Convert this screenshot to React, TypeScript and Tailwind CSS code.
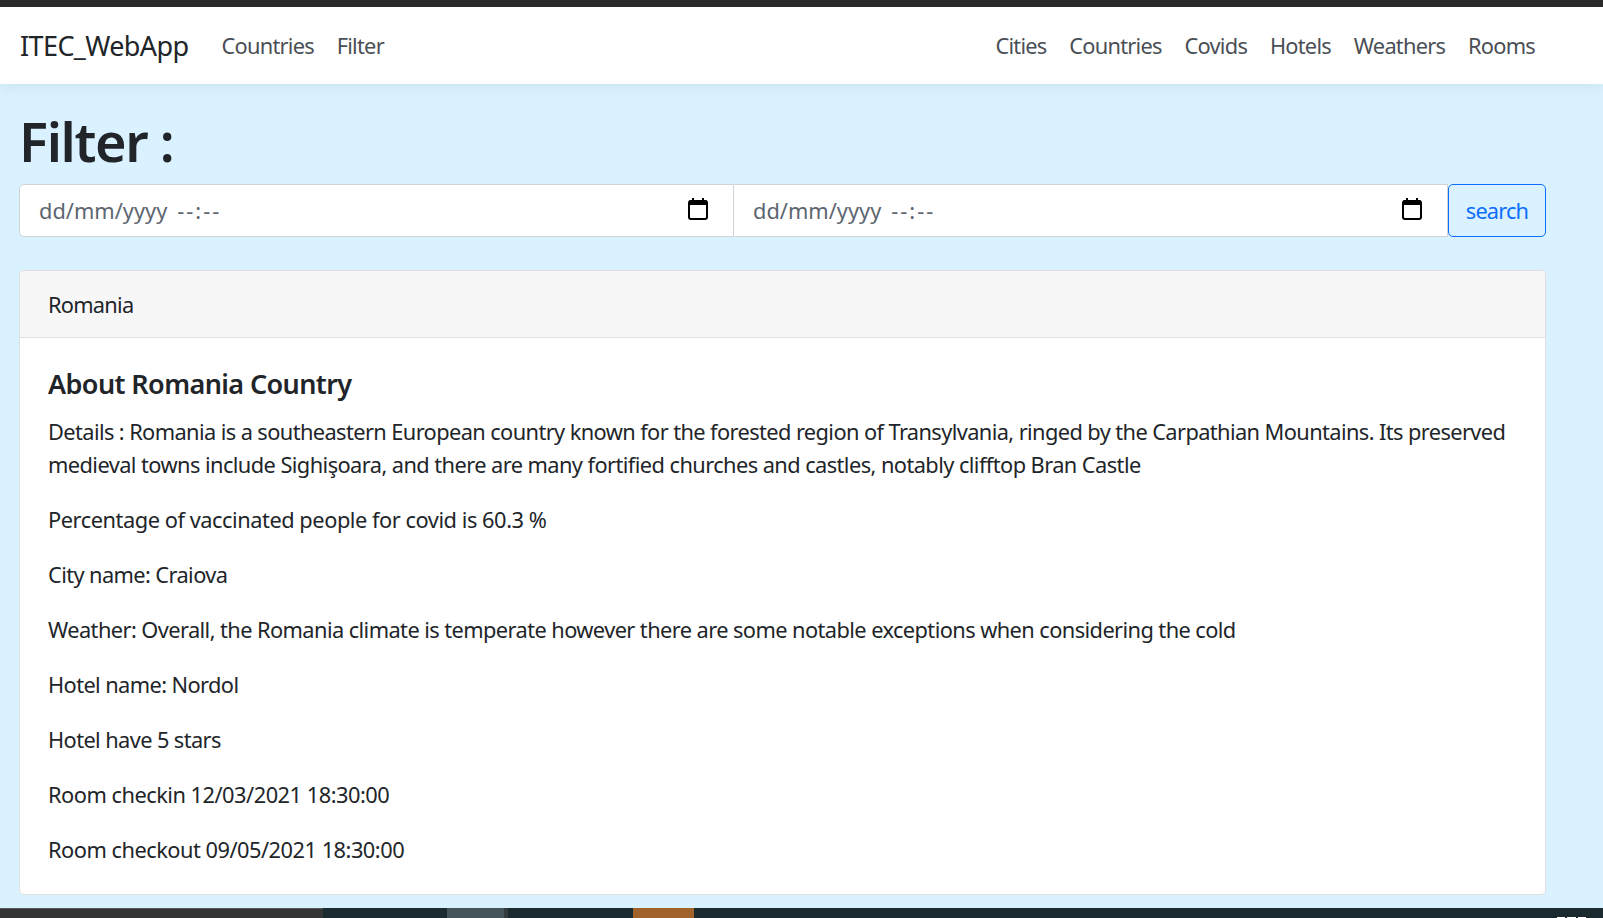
import type { ReactNode } from "react";

const fontStack = { fontFamily: '"Noto Sans", "Open Sans", sans-serif' };

const leftLinks = ["Countries", "Filter"];
const rightLinks = ["Cities", "Countries", "Covids", "Hotels", "Weathers", "Rooms"];

const CalendarIcon = () => (
  <svg width="20" height="22" viewBox="0 0 20 22" className="shrink-0 mb-[3px]">
    <path d="M4 0h2v3H4zM14 0h2v3h-2z" fill="#000" />
    <rect x="1" y="3" width="18" height="18" rx="2" fill="#fff" stroke="#000" strokeWidth="2" />
    <rect x="1" y="2.5" width="18" height="4.5" fill="#000" />
  </svg>
);

const DateField = ({ className }: { className: string }) => (
  <div className={`flex-1 flex items-center justify-between bg-white ${className}`}>
    <span className="text-[#5d6670] text-[21.8px] pt-[2px] whitespace-pre">
      dd/mm/yyyy<span className="ml-[10px] tracking-[2px]">--:--</span>
    </span>
    <CalendarIcon />
  </div>
);

const Line = ({ children, className = "tracking-[-0.6px]" }: { children: ReactNode; className?: string }) => (
  <p className={`mb-[22.3px] text-[21.8px] leading-[32.7px] text-[#212529] ${className}`}>{children}</p>
);

export default function App() {
  return (
    <div className="w-[1603px] h-[918px] overflow-hidden flex flex-col bg-[#daf2ff]" style={fontStack}>
      <div className="h-[7px] bg-[#2b2b2b] shrink-0" />
      <nav className="h-[77px] shrink-0 bg-white flex items-center pl-[20px] pr-[68px] pt-[2px] shadow-[0_3px_14px_rgba(0,0,0,0.07)] z-10">
        <span className="text-[27px] tracking-[-0.6px] text-[#212529] mr-[33px]">ITEC_WebApp</span>
        <div className="flex gap-[22.8px] text-[21.8px] tracking-[-0.75px] text-[#4a4f55]">
          {leftLinks.map((l) => (
            <a key={l}>{l}</a>
          ))}
        </div>
        <div className="ml-auto flex gap-[22.8px] text-[21.8px] tracking-[-0.75px] text-[#4a4f55]">
          {rightLinks.map((l) => (
            <a key={l}>{l}</a>
          ))}
        </div>
      </nav>
      <main className="flex-1 pl-[19px] pr-[57px] flex flex-col">
        <h1 className="mt-[22px] h-[71px] text-[54px] leading-[71px] font-semibold tracking-[-1.4px] text-[#212529]">Filter :</h1>
        <div className="flex h-[53px] mt-[7px]">
          <DateField className="border border-[#ced4da] rounded-l-[5px] pl-[19px] pr-[25px]" />
          <DateField className="border border-l-0 border-[#ced4da] pl-[19px] pr-[25px]" />
          <button className="w-[98px] shrink-0 pt-[2px] border border-[#0d6efd] rounded-[5px] text-[#0d6efd] text-[21.8px] tracking-[-0.85px]">
            search
          </button>
        </div>
        <section className="mt-[33px] h-[625px] bg-white border border-[#dfdfdf] rounded-[5px] overflow-hidden flex flex-col">
          <header className="h-[67px] shrink-0 pt-[2px] bg-[#f7f7f7] border-b border-[#dfdfdf] flex items-center px-[28px] text-[21.8px] tracking-[-0.75px] text-[#212529]">
            Romania
          </header>
          <div className="px-[28px] pt-[29px]">
            <h5 className="text-[27px] leading-[33px] font-semibold tracking-[-0.6px] text-[#212529] mb-[16px]">About Romania Country</h5>
            <Line>
              Details : Romania is a southeastern European country known for the forested region of Transylvania, ringed by the Carpathian Mountains. Its preserved{" "}
              <span className="tracking-[-0.57px]">medieval towns include Sighişoara, and there are many fortified churches and castles, notably clifftop Bran Castle</span>
            </Line>
            <Line className="tracking-[-0.46px]">Percentage of vaccinated people for covid is 60.3 %</Line>
            <Line>City name: Craiova</Line>
            <Line className="tracking-[-0.58px]">Weather: Overall, the Romania climate is temperate however there are some notable exceptions when considering the cold</Line>
            <Line>Hotel name: Nordol</Line>
            <Line>Hotel have 5 stars</Line>
            <Line className="tracking-[-0.5px]">Room checkin 12/03/2021 18:30:00</Line>
            <Line className="tracking-[-0.5px]">Room checkout 09/05/2021 18:30:00</Line>
          </div>
        </section>
      </main>
      <div className="h-[10px] shrink-0 flex bg-[#1b2b30]">
        <div className="w-[323px] bg-[#353535] border-t border-[#555]" />
        <div className="w-[124px]" />
        <div className="w-[57px] bg-[#465559]" />
        <div className="w-[4px] bg-[#353c3f]" />
        <div className="w-[125px]" />
        <div className="w-[61px] bg-[#a2622c]" />
        <div className="ml-auto mr-[17px] self-end flex gap-[2px]">
          <div className="w-[8px] h-[1px] bg-white" />
          <div className="w-[9px] h-[1px] bg-white" />
          <div className="w-[8px] h-[1px] bg-white" />
        </div>
      </div>
    </div>
  );
}
